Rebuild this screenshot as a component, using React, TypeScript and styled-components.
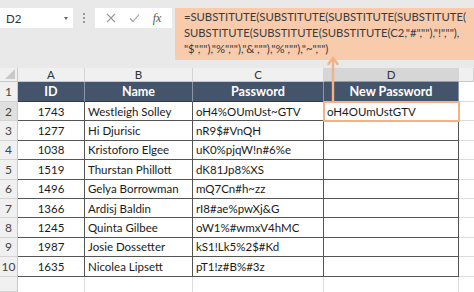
import React from 'react';
import styled, { createGlobalStyle } from 'styled-components';

const GlobalStyle = createGlobalStyle`
  html, body {
    margin: 0;
    padding: 0;
    background: #e9e9e9;
  }
  body {
    font-family: Lato, "Open Sans", sans-serif;
    color: #222;
  }
`;

const Screen = styled.div`
  position: relative;
  width: 474px;
  height: 292px;
  overflow: hidden;
  background: #e9e9e9;
`;

const FormulaBar = styled.div`
  display: flex;
  align-items: flex-start;
  height: 68px;
  padding-top: 8px;
  box-sizing: border-box;
`;

const NameBox = styled.div`
  display: flex;
  align-items: center;
  justify-content: space-between;
  width: 82px;
  height: 20px;
  padding: 0 5px 0 6px;
  box-sizing: border-box;
  background: #fff;
  font-size: 11.5px;
  color: #333;
`;

const Caret = styled.span`
  width: 0;
  height: 0;
  border-left: 2.5px solid transparent;
  border-right: 2.5px solid transparent;
  border-top: 3px solid #666;
`;

const Grip = styled.div`
  display: flex;
  flex-direction: column;
  align-items: center;
  justify-content: center;
  gap: 2px;
  width: 26px;
  height: 20px;

  span {
    width: 2px;
    height: 2px;
    background: #9a9a9a;
  }
`;

const FxBox = styled.div`
  display: flex;
  align-items: center;
  justify-content: space-around;
  width: 87px;
  height: 20px;
  background: #fff;
  padding: 0 4px;
  box-sizing: border-box;
`;

const Fx = styled.span`
  font-family: "Liberation Serif", serif;
  font-style: italic;
  font-size: 12px;
  color: #555;
`;

const Formula = styled.div`
  flex: 1;
  height: 52px;
  margin-left: 3px;
  padding: 1px 8px 0 9px;
  box-sizing: border-box;
  background: #f8cbad;
  font-size: 11.3px;
  line-height: 16px;
  color: #3a3a3a;
  white-space: pre;
`;

const Sheet = styled.div`
  display: grid;
  grid-template-columns: 18px 67px 108px 131px 135px 15px;
  grid-template-rows: 14px 20px repeat(9, 19.4px) 1fr;
  background: #fff;
  height: 224px;
`;

const ColHead = styled.div<{ $active?: boolean }>`
  display: flex;
  align-items: center;
  justify-content: center;
  background: ${(p) => (p.$active ? '#d6d6d6' : '#f0f0f0')};
  border-right: 1px solid #d4d4d4;
  border-bottom: 1px solid ${(p) => (p.$active ? '#9e9e9e' : '#c8c8c8')};
  font-size: 11.5px;
  color: #333;
  box-sizing: border-box;
`;

const Corner = styled.div`
  position: relative;
  background: #f0f0f0;
  border-right: 1px solid #c8c8c8;
  border-bottom: 1px solid #c8c8c8;
  box-sizing: border-box;

  &::after {
    content: '';
    position: absolute;
    right: 2px;
    bottom: 2px;
    width: 0;
    height: 0;
    border-left: 10px solid transparent;
    border-bottom: 10px solid #c9c9c9;
  }
`;

const RowHead = styled.div<{ $active?: boolean }>`
  display: flex;
  align-items: center;
  justify-content: center;
  background: ${(p) => (p.$active ? '#e0e0e0' : '#f0f0f0')};
  border-right: 1px solid #c8c8c8;
  border-bottom: 1px solid #d4d4d4;
  font-size: 12px;
  color: #444;
  box-sizing: border-box;
`;

const HeadCell = styled.div`
  display: flex;
  align-items: center;
  justify-content: center;
  background: #44546a;
  color: #fff;
  font-weight: 700;
  font-size: 12.6px;
  border-right: 1px solid #8a96a8;
  border-bottom: 1px solid #2f3b4c;
  box-sizing: border-box;
`;

const Cell = styled.div<{ $center?: boolean }>`
  display: flex;
  align-items: center;
  justify-content: ${(p) => (p.$center ? 'center' : 'flex-start')};
  padding-left: ${(p) => (p.$center ? '0' : '3px')};
  border-right: 1px solid #555;
  border-bottom: 1px solid #555;
  font-size: 11.5px;
  color: #1a1a1a;
  box-sizing: border-box;
  white-space: nowrap;
  overflow: hidden;
`;

const EdgeCell = styled.div`
  border-bottom: 1px solid #dcdcdc;
  box-sizing: border-box;
`;

const Picked = styled(Cell)`
  position: relative;
  overflow: visible;

  &::after {
    content: '';
    position: absolute;
    left: -1px;
    top: -1px;
    right: -2px;
    bottom: -2px;
    border: 2px solid #f4b183;
    border-radius: 1px;
  }
`;

const Blank = styled.div`
  border-right: 1px solid #dcdcdc;
  box-sizing: border-box;
`;

const Pointer = styled.svg`
  position: absolute;
  left: 327px;
  top: 56px;
  overflow: visible;
`;

const rows = [
  ['1743', 'Westleigh Solley', 'oH4%OUmUst~GTV', 'oH4OUmUstGTV'],
  ['1277', 'Hi Djurisic', 'nR9$#VnQH', ''],
  ['1038', 'Kristoforo Elgee', 'uK0%pjqW!n#6%e', ''],
  ['1519', 'Thurstan Phillott', 'dK81Jp8%XS', ''],
  ['1496', 'Gelya Borrowman', 'mQ7Cn#h~zz', ''],
  ['1366', 'Ardisj Baldin', 'rI8#ae%pwXj&G', ''],
  ['1245', 'Quinta Gilbee', 'oW1%#wmxV4hMC', ''],
  ['1987', 'Josie Dossetter', 'kS1!Lk5%2$#Kd', ''],
  ['1635', 'Nicolea Lipsett', 'pT1!z#B%#3z', ''],
];

const formula =
  '=SUBSTITUTE(SUBSTITUTE(SUBSTITUTE(SUBSTITUTE(\nSUBSTITUTE(SUBSTITUTE(SUBSTITUTE(C2,"#",""),"!",""),\n"$",""),"%",""),"&",""),"%",""),"~","")';

export default function App() {
  return (
    <Screen>
      <GlobalStyle />
      <FormulaBar>
        <NameBox>
          D2
          <Caret />
        </NameBox>
        <Grip>
          <span />
          <span />
          <span />
        </Grip>
        <FxBox>
          <svg width="10" height="10" viewBox="0 0 10 10">
            <path d="M1 1 L9 9 M9 1 L1 9" stroke="#9b9b9b" strokeWidth="1.1" />
          </svg>
          <svg width="11" height="10" viewBox="0 0 11 10">
            <path d="M1 5.5 L4 8.5 L10 1.5" stroke="#9b9b9b" strokeWidth="1.1" fill="none" />
          </svg>
          <Fx>fx</Fx>
        </FxBox>
        <Formula>{formula}</Formula>
      </FormulaBar>

      <Sheet>
        <Corner />
        <ColHead>A</ColHead>
        <ColHead>B</ColHead>
        <ColHead>C</ColHead>
        <ColHead $active>D</ColHead>
        <ColHead />

        <RowHead>1</RowHead>
        <HeadCell>ID</HeadCell>
        <HeadCell>Name</HeadCell>
        <HeadCell>Password</HeadCell>
        <HeadCell>New Password</HeadCell>
        <EdgeCell />

        {rows.map((r, i) => (
          <React.Fragment key={r[0]}>
            <RowHead $active={i === 0}>{i + 2}</RowHead>
            <Cell $center>{r[0]}</Cell>
            <Cell>{r[1]}</Cell>
            <Cell>{r[2]}</Cell>
            {i === 0 ? <Picked>{r[3]}</Picked> : <Cell>{r[3]}</Cell>}
            <EdgeCell />
          </React.Fragment>
        ))}

        <RowHead />
        <Blank />
        <Blank />
        <Blank />
        <Blank />
        <div />
      </Sheet>

      <Pointer width="12" height="46" viewBox="0 0 12 46">
        <path d="M6 2 L6 46" stroke="#f4b183" strokeWidth="2.4" />
        <path d="M1.5 8 L6 2 L10.5 8" stroke="#f4b183" strokeWidth="2.4" fill="none" strokeLinecap="round" />
      </Pointer>
    </Screen>
  );
}
